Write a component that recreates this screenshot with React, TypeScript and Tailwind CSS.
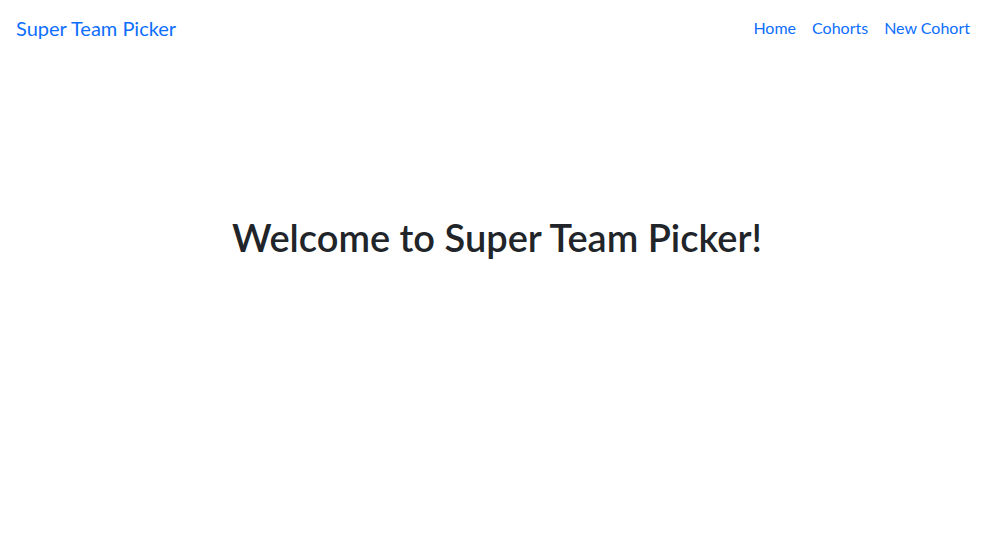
import React from 'react'

const links = ['Home', 'Cohorts', 'New Cohort']

const App = () => {
  return (
    <div className="min-h-screen bg-white font-['Lato',sans-serif]">
      <nav className="flex items-center justify-between pl-4 pr-4 h-[56px]">
        <a href="#" className="text-[20px] text-[#0d6efd]">
          Super Team Picker
        </a>
        <div className="flex items-center">
          {links.map((l) => (
            <a key={l} href="#" className="px-2 text-[16px] text-[#0d6efd]">
              {l}
            </a>
          ))}
        </div>
      </nav>
      <div className="flex justify-center pt-[159px]">
        <h1 className="text-[38px] font-semibold text-[#212529] leading-[1.2]">
          Welcome to Super Team Picker!
        </h1>
      </div>
    </div>
  )
}

export default App
